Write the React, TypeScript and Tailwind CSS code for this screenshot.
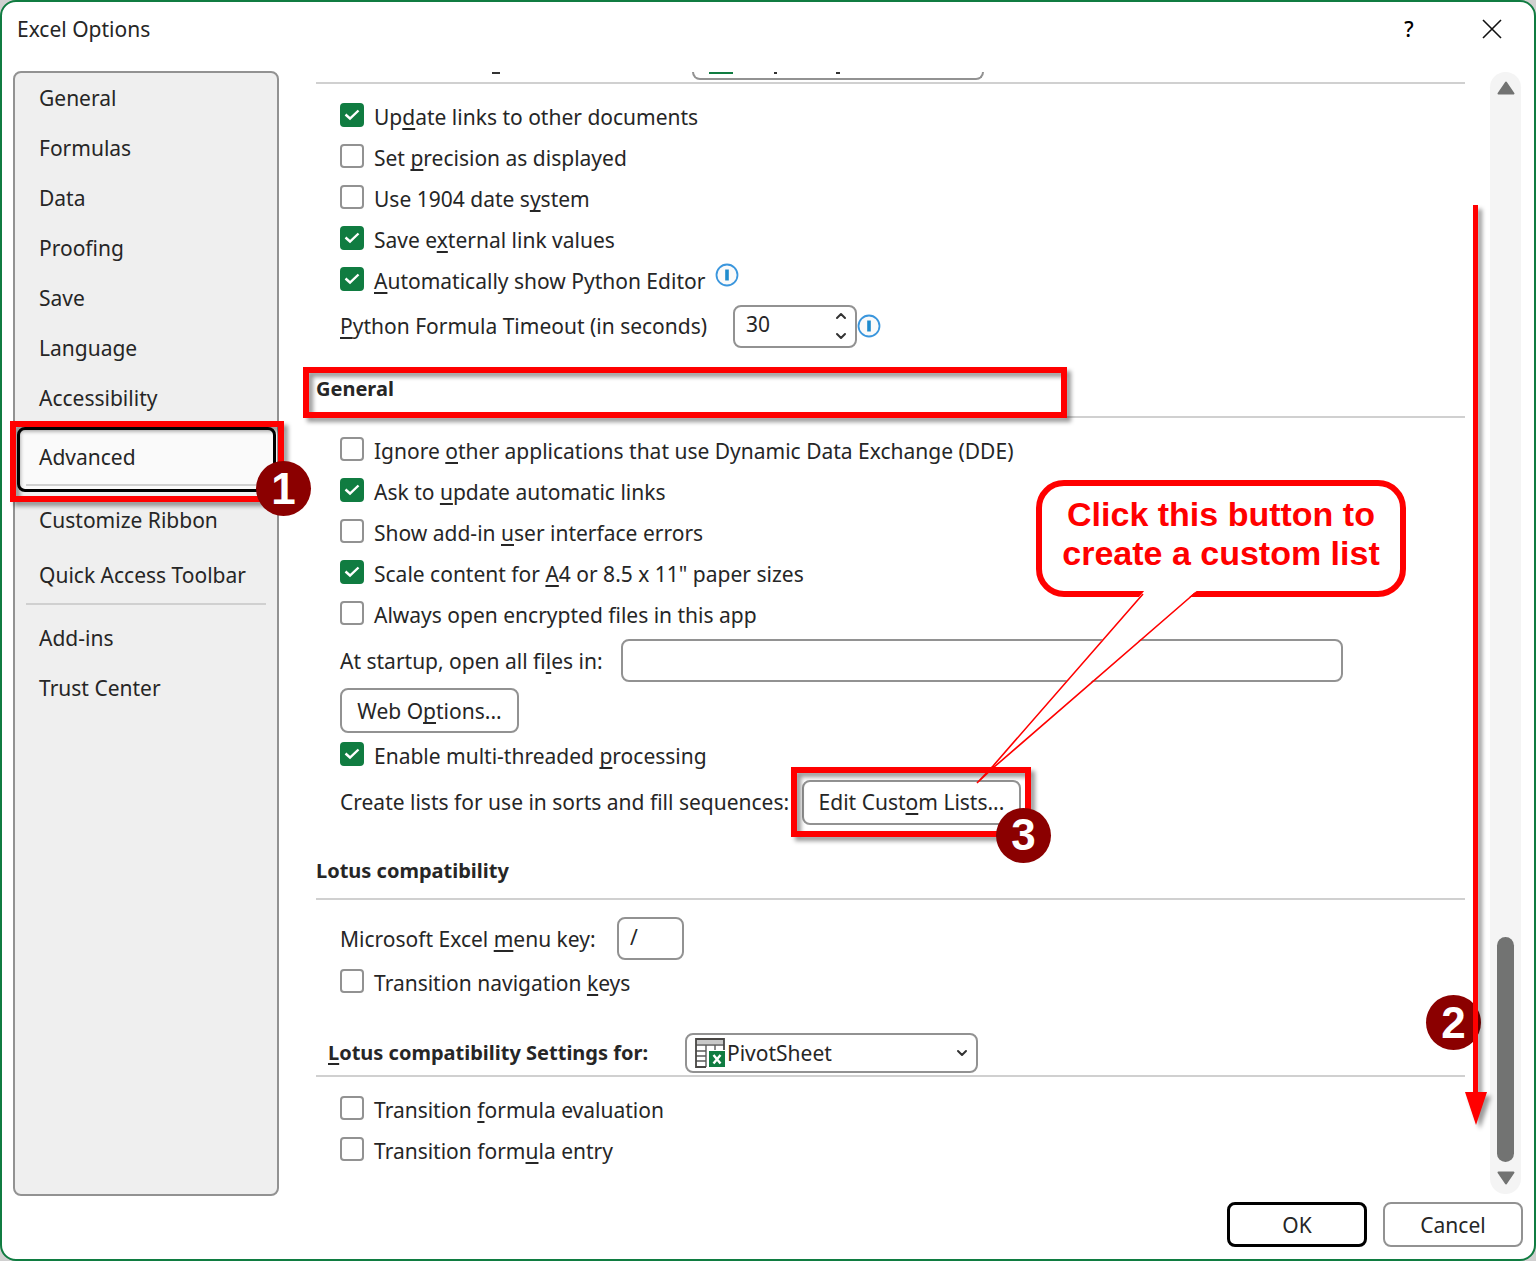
import { useState } from 'react';
import type { ReactNode } from 'react';
import { ChevronDown, ChevronUp } from 'lucide-react';

// '&' marks the access key, as in a Win32 resource string
function Mnemonic({ text }: { text: string }) {
  const at = text.indexOf('&');
  if (at < 0) return <>{text}</>;
  return (
    <>
      {text.slice(0, at)}
      <span className="underline decoration-2 underline-offset-3 [text-decoration-skip-ink:none]">
        {text[at + 1]}
      </span>
      {text.slice(at + 2)}
    </>
  );
}

interface CheckRowProps {
  label: string;
  defaultChecked?: boolean;
  children?: ReactNode;
}

function CheckRow({ label, defaultChecked, children }: CheckRowProps) {
  return (
    <div className="flex h-[41px] items-center pl-6">
      <label className="flex items-center gap-[10px]">
        <span className="relative flex size-6">
          <input
            type="checkbox"
            defaultChecked={defaultChecked}
            className="peer size-6 appearance-none rounded-[4px] border-2 border-[#929292] bg-white checked:border-[#107c41] checked:bg-[#107c41]"
          />
          <svg viewBox="0 0 24 24" className="pointer-events-none absolute inset-0 hidden peer-checked:block">
            <path d="M5.5 11.5L10 15.5L18.5 7.5" fill="none" stroke="#fff" strokeWidth="2.4" />
          </svg>
        </span>
        <span className="pt-1">
          <Mnemonic text={label} />
        </span>
      </label>
      {children}
    </div>
  );
}

function InfoIcon() {
  return (
    <svg viewBox="0 0 24 24" className="size-6 shrink-0" role="img" aria-label="Info">
      <circle cx="12" cy="12" r="10.5" fill="#fafafa" stroke="#3a96dd" strokeWidth="1.8" />
      <rect x="10.2" y="6.5" width="3.6" height="11" fill="#1e8bcd" />
    </svg>
  );
}

function SheetIcon() {
  return (
    <svg viewBox="0 0 30 30" className="pointer-events-none absolute top-[5px] left-[10px] size-[30px]">
      <rect x="1" y="1" width="28" height="28" fill="#fff" />
      <rect x="1" y="1" width="28" height="5" fill="#c8c8c8" />
      <path d="M1 7H29M1 13H11M1 18H11M1 23H11M11 7V29M20 7V12" stroke="#5a5a5a" strokeWidth="1.4" fill="none" />
      <path d="M29 12V1H1V29H11" stroke="#484644" strokeWidth="1.8" fill="none" />
      <rect x="12" y="12" width="18" height="18" fill="#fff" />
      <rect x="14" y="13" width="16" height="16" fill="#107c41" />
      <path d="M18.5 17L25.5 25.5M25.5 17L18.5 25.5" stroke="#fff" strokeWidth="2.4" />
    </svg>
  );
}

function Badge({ n, className }: { n: number; className: string }) {
  return (
    <span
      className={`absolute flex size-[55px] items-center justify-center rounded-full bg-[#8b0000] font-['Liberation_Sans',sans-serif] text-[44px] leading-none font-bold text-white ${className}`}
    >
      {n}
    </span>
  );
}

function Highlight({ className }: { className: string }) {
  return (
    <span
      className={`pointer-events-none absolute border-6 border-[#ff0000] drop-shadow-[4px_4px_2px_rgba(0,0,0,0.4)] ${className}`}
    />
  );
}

const topPages = ['General', 'Formulas', 'Data', 'Proofing', 'Save', 'Language', 'Accessibility'];

function NavItem({ label, className, onClick }: { label: string; className: string; onClick: () => void }) {
  return (
    <button type="button" onClick={onClick} className={`flex w-full items-center pl-6 text-left ${className}`}>
      {label}
    </button>
  );
}

function Sidebar() {
  const [, setPage] = useState('Advanced');
  return (
    <nav className="ml-[11px] w-[266px] shrink-0 rounded-lg border-2 border-[#929292] bg-[#efefef]">
      {topPages.map((p) => (
        <NavItem key={p} label={p} className="h-[50px]" onClick={() => setPage(p)} />
      ))}
      <div className="relative mt-1 mr-px ml-[2px]">
        <button
          type="button"
          onClick={() => setPage('Advanced')}
          className="flex h-[65px] w-full flex-col rounded-lg border-3 border-black bg-[#fafafa] px-[6px] pt-[13px] text-left"
        >
          <span className="pl-[13px] leading-7">Advanced</span>
          <span className="mt-[13px] block h-[2px] w-full bg-[#d0d0d0]" />
        </button>
        <Highlight className="-top-[6px] -left-[7px] h-[81px] w-[274px]" />
        <Badge n={1} className="top-[34px] -right-[35px]" />
      </div>
      <NavItem label="Customize Ribbon" className="h-[55px]" onClick={() => setPage('Customize Ribbon')} />
      <NavItem label="Quick Access Toolbar" className="h-14" onClick={() => setPage('Quick Access Toolbar')} />
      <hr className="mx-[11px] mb-2 border-t-2 border-[#d0d0d0]" />
      <NavItem label="Add-ins" className="h-[50px]" onClick={() => setPage('Add-ins')} />
      <NavItem label="Trust Center" className="h-[50px]" onClick={() => setPage('Trust Center')} />
    </nav>
  );
}

function Callout() {
  return (
    <div className="pointer-events-none absolute top-[409px] left-[720px] w-[370px]">
      <div className="h-[117px] rounded-[28px] border-6 border-[#ff0000] bg-white pt-[9px] text-center font-['Liberation_Sans',sans-serif] text-[34px] leading-[39px] font-bold whitespace-nowrap text-[#ff0000]">
        Click this button to
        <br />
        create a custom list
      </div>
      <svg viewBox="0 0 230 200" className="absolute top-[110px] -left-[65px] h-[200px] w-[230px]">
        <path d="M174 0L22 176L223 3L227 0Z" fill="#fff" />
        <path d="M172 4L22 176L6 193L22 178L224 3" fill="none" stroke="#ff0000" strokeWidth="1.6" />
      </svg>
    </div>
  );
}

function ScrollArrow() {
  return (
    <div className="pointer-events-none relative w-[25px] shrink-0">
      <Badge n={2} className="top-[924px] -left-[39px]" />
      <svg
        viewBox="0 0 24 920"
        className="absolute top-[134px] -left-px h-[920px] w-6 overflow-visible drop-shadow-[4px_4px_2px_rgba(0,0,0,0.4)]"
      >
        <path d="M9 0H14V887H23L12 920L1 887H9Z" fill="#ff0000" />
      </svg>
    </div>
  );
}

function Scrollbar() {
  return (
    <div className="mt-px mr-[13px] mb-[2px] flex w-[31px] shrink-0 flex-col items-center rounded-full bg-[#f4f4f4] py-[9px]">
      <svg viewBox="0 0 18 14" className="h-[14px] w-[18px]">
        <path d="M9 1.5L16.5 12.5H1.5Z" fill="#727372" stroke="#727372" strokeWidth="2" strokeLinejoin="round" />
      </svg>
      <div className="mt-auto mb-[9px] h-[225px] w-[17px] rounded-full bg-[#727372]" />
      <svg viewBox="0 0 18 14" className="h-[14px] w-[18px]">
        <path d="M9 12.5L16.5 1.5H1.5Z" fill="#727372" stroke="#727372" strokeWidth="2" strokeLinejoin="round" />
      </svg>
    </div>
  );
}

function Settings() {
  return (
    <main className="relative ml-[37px] min-w-0 flex-1">
      {/* tail of the group scrolled out above */}
      <div className="flex h-[13px] items-start border-b-2 border-[#d0d0d0] pt-px">
        <span className="ml-[176px] h-[2px] w-2 bg-[#333]" />
        <div className="ml-[192px] flex h-[8px] w-[292px] rounded-b-lg border-2 border-t-0 border-[#929292]">
          <span className="ml-[15px] h-[2px] w-6 bg-[#107c41]" />
          <span className="ml-[41px] h-[2px] w-[3px] bg-[#333]" />
          <span className="ml-[59px] h-[2px] w-1 bg-[#333]" />
        </div>
      </div>

      <div className="pt-[10px]">
        <CheckRow label="Up&date links to other documents" defaultChecked />
        <CheckRow label="Set &precision as displayed" />
        <CheckRow label="Use 1904 date s&ystem" />
        <CheckRow label="Save e&xternal link values" defaultChecked />
        <CheckRow label="&Automatically show Python Editor" defaultChecked>
          <span className="mb-2 ml-[10px]">
            <InfoIcon />
          </span>
        </CheckRow>
        <div className="flex h-[54px] items-center pl-6">
          <label htmlFor="timeout" className="w-[393px]">
            <Mnemonic text="&Python Formula Timeout (in seconds)" />
          </label>
          <div className="flex h-[43px] w-[124px] items-center rounded-lg border-2 border-[#929292] bg-white pr-[6px] pl-[11px]">
            <input id="timeout" defaultValue="30" className="min-w-0 flex-1 bg-transparent pb-1 outline-none" />
            <div className="flex flex-col gap-1 text-[#333]">
              <button type="button" aria-label="Increase">
                <ChevronUp size={16} strokeWidth={3} />
              </button>
              <button type="button" aria-label="Decrease">
                <ChevronDown size={16} strokeWidth={3} />
              </button>
            </div>
          </div>
          <InfoIcon />
        </div>
      </div>

      <div className="relative h-[65px] border-b-2 border-[#d0d0d0] pt-[22px]">
        <h2 className="text-[20px] leading-7 font-bold">General</h2>
        <Highlight className="top-[14px] -left-[13px] h-[51px] w-[764px]" />
      </div>
      <div className="pt-[10px]">
        <CheckRow label="Ignore &other applications that use Dynamic Data Exchange (DDE)" />
        <CheckRow label="Ask to &update automatic links" defaultChecked />
        <CheckRow label="Show add-in &user interface errors" />
        <CheckRow label={'Scale content for &A4 or 8.5 x 11" paper sizes'} defaultChecked />
        <CheckRow label="Always open encrypted files in this app" />
        <div className="flex h-[55px] items-center pl-6">
          <label htmlFor="startup" className="w-[281px]">
            <Mnemonic text="At startup, open all fi&les in:" />
          </label>
          <input
            id="startup"
            className="mr-[122px] h-[43px] min-w-0 flex-1 rounded-lg border-2 border-[#929292] bg-white px-3"
          />
        </div>
        <button type="button" className="ml-6 block h-[45px] w-[179px] rounded-lg border-2 border-[#929292] bg-white">
          <Mnemonic text="Web O&ptions..." />
        </button>
        <CheckRow label="Enable multi-threaded &processing" defaultChecked />
        <div className="flex h-14 items-center pl-6">
          <span className="w-[462px] whitespace-nowrap">Create lists for use in sorts and fill sequences:</span>
          <div className="relative">
            <button type="button" className="h-[45px] w-[219px] rounded-lg border-2 border-[#929292] bg-white">
              <Mnemonic text="Edit Cust&om Lists..." />
            </button>
            <Highlight className="-top-[13px] -left-[11px] h-[70px] w-[240px]" />
            <Badge n={3} className="top-[28px] -right-[30px]" />
          </div>
        </div>
      </div>

      <h2 className="h-[70px] border-b-2 border-[#d0d0d0] pt-[27px] text-[20px] leading-7 font-bold">
        Lotus compatibility
      </h2>
      <div className="pt-[17px]">
        <div className="flex items-center pl-6">
          <label htmlFor="menukey" className="w-[277px]">
            <Mnemonic text="Microsoft Excel &menu key:" />
          </label>
          <input
            id="menukey"
            defaultValue="/"
            className="h-[43px] w-[67px] rounded-lg border-2 border-[#929292] bg-white px-[11px] pb-1"
          />
        </div>
        <CheckRow label="Transition navigation &keys" />
      </div>

      <div className="mt-8 flex items-center border-b-2 border-[#d0d0d0] pb-[2px] pl-3">
        <label htmlFor="sheet" className="w-[357px] text-[20px] font-bold">
          <Mnemonic text="&Lotus compatibility Settings for:" />
        </label>
        <div className="relative">
          <select
            id="sheet"
            className="h-10 w-[293px] appearance-none rounded-lg border-2 border-[#929292] bg-white pl-10"
          >
            <option>PivotSheet</option>
          </select>
          <SheetIcon />
          <ChevronDown size={16} strokeWidth={3} className="pointer-events-none absolute top-3 right-2 text-[#333]" />
        </div>
      </div>
      <div className="pt-[10px]">
        <CheckRow label="Transition &formula evaluation" />
        <CheckRow label="Transition form&ula entry" />
      </div>

      <Callout />
    </main>
  );
}

export default function App() {
  return (
    <div className="min-h-screen bg-[#d0d0d0] font-['Noto_Sans',sans-serif] text-[21px] leading-7 text-[#262626]">
      <div className="flex min-h-screen flex-col rounded-2xl border-2 border-[#107c41] bg-white">
        <header className="flex h-[69px] items-start pt-[13px] pr-8 pl-[15px]">
          <h1>Excel Options</h1>
          <button type="button" aria-label="Help" className="ml-auto w-6 font-medium text-black">
            ?
          </button>
          <button type="button" aria-label="Close" className="mt-1 ml-[61px]">
            <svg viewBox="0 0 20 20" className="size-5">
              <path d="M1 1L19 19M19 1L1 19" stroke="#111" strokeWidth="1.6" />
            </svg>
          </button>
        </header>
        <div className="flex flex-1">
          <Sidebar />
          <Settings />
          <ScrollArrow />
          <Scrollbar />
        </div>
        <footer className="flex justify-end gap-4 pt-[6px] pr-[11px] pb-3">
          <button type="button" className="h-[45px] w-[140px] rounded-lg border-3 border-black bg-white">
            OK
          </button>
          <button type="button" className="h-[45px] w-[140px] rounded-lg border-2 border-[#929292] bg-white">
            Cancel
          </button>
        </footer>
      </div>
    </div>
  );
}
